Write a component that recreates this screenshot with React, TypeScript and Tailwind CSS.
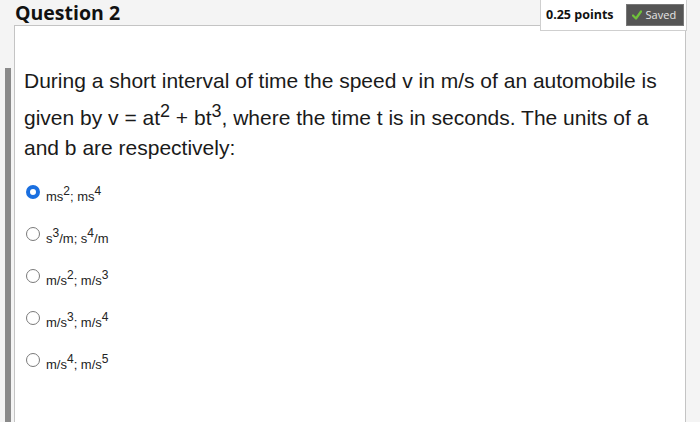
import React from "react";

type Parts = [string, string, string, string, string];

const options: { id: string; parts: Parts }[] = [
  { id: "a", parts: ["ms", "2", "; ms", "4", ""] },
  { id: "b", parts: ["s", "3", "/m; s", "4", "/m"] },
  { id: "c", parts: ["m/s", "2", "; m/s", "3", ""] },
  { id: "d", parts: ["m/s", "3", "; m/s", "4", ""] },
  { id: "e", parts: ["m/s", "4", "; m/s", "5", ""] },
];

function Radio({ checked }: { checked: boolean }) {
  return checked ? (
    <span className="block w-[14px] h-[14px] rounded-full border-[4px] border-[#1a6fe0] bg-white shrink-0" />
  ) : (
    <span className="block w-[14px] h-[14px] rounded-full border border-[#7a7a7a] bg-white shrink-0" />
  );
}

function Option({ parts, checked }: { parts: Parts; checked: boolean }) {
  const [a, b, c, d, e] = parts;
  return (
    <div className="flex items-center gap-[6px] h-[42px]">
      <Radio checked={checked} />
      <span className="text-[13px] text-[#222] leading-none pt-[8px]">
        {a}
        <span className="text-[12px] relative -top-[6px]">{b}</span>
        {c}
        <span className="text-[12px] relative -top-[6px]">{d}</span>
        {e}
      </span>
    </div>
  );
}

export default function App() {
  return (
    <div
      className="relative w-[700px] h-[422px] overflow-hidden bg-[#f4f4f4] flex"
      style={{ fontFamily: "'Liberation Sans', Arial, sans-serif" }}
    >
      {/* left accent strip */}
      <div className="w-[14px] shrink-0 flex flex-col">
        <div className="h-[68px]" />
        <div className="flex-1 ml-[5px] w-[6px] bg-[#8a8a8a]" />
      </div>

      <div className="w-[672px] flex flex-col shrink-0">
        <div className="h-[25px] flex items-center pl-[1px]">
          <h2
            className="text-[19.5px] font-bold text-[#111] leading-none"
            style={{ fontFamily: "'Open Sans', sans-serif" }}
          >
            Question 2
          </h2>
        </div>

        <div className="flex-1 bg-white border border-[#c4c4c4] border-b-0 pl-[9px] pr-[20px] pt-[40px]">
          <p className="text-[21px] leading-[30px] text-[#1a1a1a]">
            During a short interval of time the speed v in m/s of an automobile is given by v = at
            <span className="text-[18px] leading-[30px] align-[8px]">2</span> + bt
            <span className="text-[18px] leading-[30px] align-[8px]">3</span>, where the time t is in seconds. The units of a
            and b are respectively:
          </p>

          <div className="mt-[8px] pl-[2px] flex flex-col">
            {options.map((o, i) => (
              <Option key={o.id} parts={o.parts} checked={i === 0} />
            ))}
          </div>
        </div>
      </div>

      {/* points / saved box */}
      <div
        className="absolute top-0 right-[13px] w-[147px] h-[31px] bg-white border border-t-0 border-[#cfcfcf] flex items-center pl-[5px] gap-[12px]"
        style={{ fontFamily: "'Open Sans', sans-serif" }}
      >
        <span className="text-[12.5px] font-bold text-[#111]">0.25 points</span>
        <span className="flex items-center gap-[4px] h-[22px] w-[58px] bg-[#555] border border-[#777] pl-[5px] text-[11px] text-[#e6e6e6]">
          <svg width="10" height="10" viewBox="0 0 10 10">
            <path d="M1 5.5 L4 8.5 L9 1.5" stroke="#6fc23a" strokeWidth="2.2" fill="none" strokeLinecap="round" strokeLinejoin="round" />
          </svg>
          Saved
        </span>
      </div>
    </div>
  );
}
